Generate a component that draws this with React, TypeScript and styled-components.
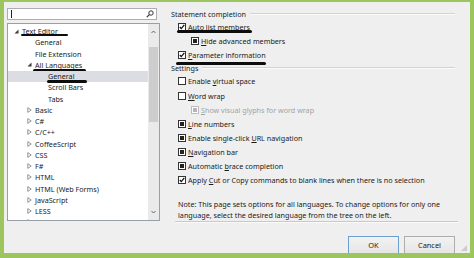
import React from 'react';
import styled, { createGlobalStyle } from 'styled-components';

const Global = createGlobalStyle`
  html, body { margin: 0; padding: 0; background: #efefef; }
  body { font-family: "Segoe UI", "Noto Sans", sans-serif; }
`;

const Frame = styled.div`
  position: relative;
  width: 474px;
  height: 258px;
  box-sizing: border-box;
  border-style: solid;
  border-color: #9dc55d;
  border-width: 2px 4px 5px 4px;
  background: #efefef;
  display: grid;
  grid-template-columns: 160px 1fr;
  font-size: 7.2px;
  color: #1b1b1b;
  overflow: hidden;
`;

const LeftPane = styled.div`
  display: flex;
  flex-direction: column;
  padding: 6px 4px 0 3px;
  gap: 3px;
`;

const SearchBox = styled.div`
  width: 150px;
  height: 12px;
  box-sizing: border-box;
  border: 1px solid #abadb3;
  background: #fff;
  display: flex;
  align-items: center;
  justify-content: space-between;
  padding: 0 2px 0 3px;
`;

const Caret = styled.span`
  width: 0;
  height: 8px;
  border-left: 1px solid #222;
`;

const Tree = styled.div`
  height: 198px;
  box-sizing: border-box;
  border: 1px solid #9a9ea6;
  background: #fff;
  display: flex;
`;

const TreeList = styled.div`
  flex: 1;
  padding-top: 1.5px;
  overflow: hidden;
`;

const TreeRow = styled.div<{ $level: number; $selected?: boolean }>`
  position: relative;
  height: 11.25px;
  display: flex;
  align-items: center;
  padding-left: ${(p) => 6 + p.$level * 13}px;
  background: ${(p) => (p.$selected ? '#dcdce3' : 'transparent')};
  white-space: nowrap;
`;

const Expander = styled.span`
  width: 8px;
  height: 8px;
  display: flex;
  align-items: center;
  flex: none;
`;

const Mark = styled.span<{ $left: number; $top: number; $width: number; $thick?: number }>`
  position: absolute;
  left: ${(p) => p.$left}px;
  top: ${(p) => p.$top}px;
  width: ${(p) => p.$width}px;
  height: ${(p) => p.$thick ?? 2.5}px;
  background: #0d0d0d;
  border-radius: 2px;
  pointer-events: none;
`;

const ScrollBar = styled.div`
  width: 11px;
  flex: none;
  background: #eaeaea;
  display: flex;
  flex-direction: column;
`;

const ScrollArrow = styled.div`
  height: 16px;
  display: flex;
  align-items: center;
  justify-content: center;
`;

const ScrollTrack = styled.div`
  flex: 1;
  padding: 7px 1px 0 1px;
`;

const Thumb = styled.div`
  height: 75px;
  background: #cdcdcd;
`;

const RightPane = styled.div`
  display: flex;
  flex-direction: column;
  padding: 6px 15px 0 7px;
`;

const GroupHeader = styled.div`
  height: 12px;
  display: flex;
  align-items: center;
  gap: 4px;
  white-space: nowrap;
`;

const HeaderLine = styled.span`
  flex: 1;
  height: 0;
  border-top: 1px solid #d2d2d6;
  border-bottom: 1px solid #fbfbfb;
`;

const CheckRow = styled.div<{ $level: number; $disabled?: boolean }>`
  position: relative;
  height: 14.15px;
  display: flex;
  align-items: center;
  gap: 2px;
  padding-left: ${(p) => (p.$level === 1 ? 7 : 20)}px;
  color: ${(p) => (p.$disabled ? '#a3a3a3' : '#1b1b1b')};
  white-space: nowrap;
`;

type CheckState = 'checked' | 'square' | 'empty';

const Box = styled.span<{ $disabled?: boolean }>`
  width: 8px;
  height: 8px;
  box-sizing: border-box;
  border: 1px solid ${(p) => (p.$disabled ? '#bcbcbc' : '#333')};
  background: #fff;
  display: flex;
  align-items: center;
  justify-content: center;
  flex: none;
`;

const Square = styled.span<{ $disabled?: boolean }>`
  width: 4px;
  height: 4px;
  background: ${(p) => (p.$disabled ? '#b5b5b5' : '#222')};
`;

const Note = styled.div`
  margin-top: 11.5px;
  padding-left: 7px;
  line-height: 10.5px;
  white-space: nowrap;
`;

const Separator = styled.div`
  margin: 1px -3px 0 4px;
  border-top: 1px solid #c9c9cc;
  border-bottom: 1px solid #fafafa;
`;

const ButtonRow = styled.div`
  margin-top: 13px;
  display: flex;
  justify-content: flex-end;
  gap: 5px;
`;

const Button = styled.div<{ $default?: boolean }>`
  width: 51px;
  height: 18px;
  box-sizing: border-box;
  border: 1px solid ${(p) => (p.$default ? '#6d9fd0' : '#adadad')};
  background: linear-gradient(#f2f2f2, #e6e6e6);
  display: flex;
  align-items: center;
  justify-content: center;
  font-size: 7.4px;
`;

const Grip = styled.div`
  position: absolute;
  right: 3px;
  bottom: 2px;
  width: 6px;
  height: 6px;
  background-image: radial-gradient(circle, #b8b8b8 0.6px, transparent 0.9px);
  background-size: 2px 2px;
  clip-path: polygon(100% 0, 100% 100%, 0 100%);
`;

const ExpandedIcon = () => (
  <svg width="5" height="5" viewBox="0 0 5 5">
    <polygon points="4.5,0.5 4.5,4.5 0.5,4.5" fill="#3a3a3a" />
  </svg>
);

const CollapsedIcon = () => (
  <svg width="5" height="6" viewBox="0 0 5 6">
    <polygon points="0.8,0.6 4.2,3 0.8,5.4" fill="none" stroke="#7a7a7a" strokeWidth="0.8" />
  </svg>
);

const SearchIcon = () => (
  <svg width="8" height="8" viewBox="0 0 8 8">
    <circle cx="5" cy="3" r="2.2" fill="none" stroke="#333" strokeWidth="1" />
    <line x1="3.4" y1="4.6" x2="0.8" y2="7.2" stroke="#333" strokeWidth="1.2" />
  </svg>
);

const Chevron = ({ up }: { up?: boolean }) => (
  <svg width="5" height="4" viewBox="0 0 5 4">
    <polyline
      points={up ? '0.5,3 2.5,1 4.5,3' : '0.5,1 2.5,3 4.5,1'}
      fill="none"
      stroke="#666"
      strokeWidth="1"
    />
  </svg>
);

const Check = ({ state, disabled }: { state: CheckState; disabled?: boolean }) => (
  <Box $disabled={disabled}>
    {state === 'checked' && (
      <svg width="6" height="6" viewBox="0 0 6 6">
        <polyline points="0.8,3 2.3,4.6 5.3,0.9" fill="none" stroke="#111" strokeWidth="1.3" />
      </svg>
    )}
    {state === 'square' && <Square $disabled={disabled} />}
  </Box>
);

type TreeItem = {
  label: string;
  level: number;
  exp?: 'open' | 'closed';
  selected?: boolean;
  mark?: { left: number; top: number; width: number };
};

const treeItems: TreeItem[] = [
  { label: 'Text Editor', level: 0, exp: 'open', mark: { left: 12.5, top: 8.3, width: 47 } },
  { label: 'General', level: 1 },
  { label: 'File Extension', level: 1 },
  { label: 'All Languages', level: 1, exp: 'open', mark: { left: 25, top: 10, width: 53 } },
  { label: 'General', level: 2, selected: true, mark: { left: 38.5, top: 9.5, width: 40 } },
  { label: 'Scroll Bars', level: 2 },
  { label: 'Tabs', level: 2 },
  { label: 'Basic', level: 1, exp: 'closed' },
  { label: 'C#', level: 1, exp: 'closed' },
  { label: 'C/C++', level: 1, exp: 'closed' },
  { label: 'CoffeeScript', level: 1, exp: 'closed' },
  { label: 'CSS', level: 1, exp: 'closed' },
  { label: 'F#', level: 1, exp: 'closed' },
  { label: 'HTML', level: 1, exp: 'closed' },
  { label: 'HTML (Web Forms)', level: 1, exp: 'closed' },
  { label: 'JavaScript', level: 1, exp: 'closed' },
  { label: 'LESS', level: 1, exp: 'closed' },
  { label: 'PlainText', level: 1, exp: 'closed' },
];

type Opt = {
  node: React.ReactNode;
  level: number;
  state: CheckState;
  disabled?: boolean;
  mark?: { left: number; top: number; width: number };
};

const completion: Opt[] = [
  { node: <>Auto list members</>, level: 1, state: 'checked', mark: { left: 6, top: 9.5, width: 75 } },
  { node: <><u>H</u>ide advanced members</>, level: 2, state: 'square' },
  { node: <><u>P</u>arameter information</>, level: 1, state: 'checked', mark: { left: 5, top: 13.5, width: 90 } },
];

const settings: Opt[] = [
  { node: <>Enable <u>v</u>irtual space</>, level: 1, state: 'empty' },
  { node: <><u>W</u>ord wrap</>, level: 1, state: 'empty' },
  { node: <><u>S</u>how visual glyphs for word wrap</>, level: 2, state: 'square', disabled: true },
  { node: <><u>L</u>ine numbers</>, level: 1, state: 'square' },
  { node: <>Enable single-click <u>U</u>RL navigation</>, level: 1, state: 'square' },
  { node: <><u>N</u>avigation bar</>, level: 1, state: 'square' },
  { node: <>Automatic <u>b</u>race completion</>, level: 1, state: 'square' },
  { node: <>Apply <u>C</u>ut or Copy commands to blank lines when there is no selection</>, level: 1, state: 'checked' },
];

const OptionRow = ({ o }: { o: Opt }) => (
  <CheckRow $level={o.level} $disabled={o.disabled}>
    <Check state={o.state} disabled={o.disabled} />
    <span>{o.node}</span>
    {o.mark && <Mark $left={o.mark.left} $top={o.mark.top} $width={o.mark.width} $thick={3} />}
  </CheckRow>
);

export default function App() {
  return (
    <>
      <Global />
      <Frame>
        <LeftPane>
          <SearchBox>
            <Caret />
            <SearchIcon />
          </SearchBox>
          <Tree>
            <TreeList>
              {treeItems.map((t, i) => (
                <TreeRow key={i} $level={t.level} $selected={t.selected}>
                  <Expander>
                    {t.exp === 'open' && <ExpandedIcon />}
                    {t.exp === 'closed' && <CollapsedIcon />}
                  </Expander>
                  <span>{t.label}</span>
                  {t.mark && <Mark $left={t.mark.left} $top={t.mark.top} $width={t.mark.width} />}
                </TreeRow>
              ))}
            </TreeList>
            <ScrollBar>
              <ScrollArrow>
                <Chevron up />
              </ScrollArrow>
              <ScrollTrack>
                <Thumb />
              </ScrollTrack>
              <ScrollArrow>
                <Chevron />
              </ScrollArrow>
            </ScrollBar>
          </Tree>
        </LeftPane>
        <RightPane>
          <GroupHeader>
            <span>Statement completion</span>
            <HeaderLine />
          </GroupHeader>
          {completion.map((o, i) => (
            <OptionRow key={i} o={o} />
          ))}
          <GroupHeader>
            <span>Settings</span>
            <HeaderLine />
          </GroupHeader>
          {settings.map((o, i) => (
            <OptionRow key={i} o={o} />
          ))}
          <Note>
            Note: This page sets options for all languages. To change options for only one
            <br />
            language, select the desired language from the tree on the left.
          </Note>
          <Separator />
          <ButtonRow>
            <Button $default>OK</Button>
            <Button>Cancel</Button>
          </ButtonRow>
        </RightPane>
        <Grip />
      </Frame>
    </>
  );
}
